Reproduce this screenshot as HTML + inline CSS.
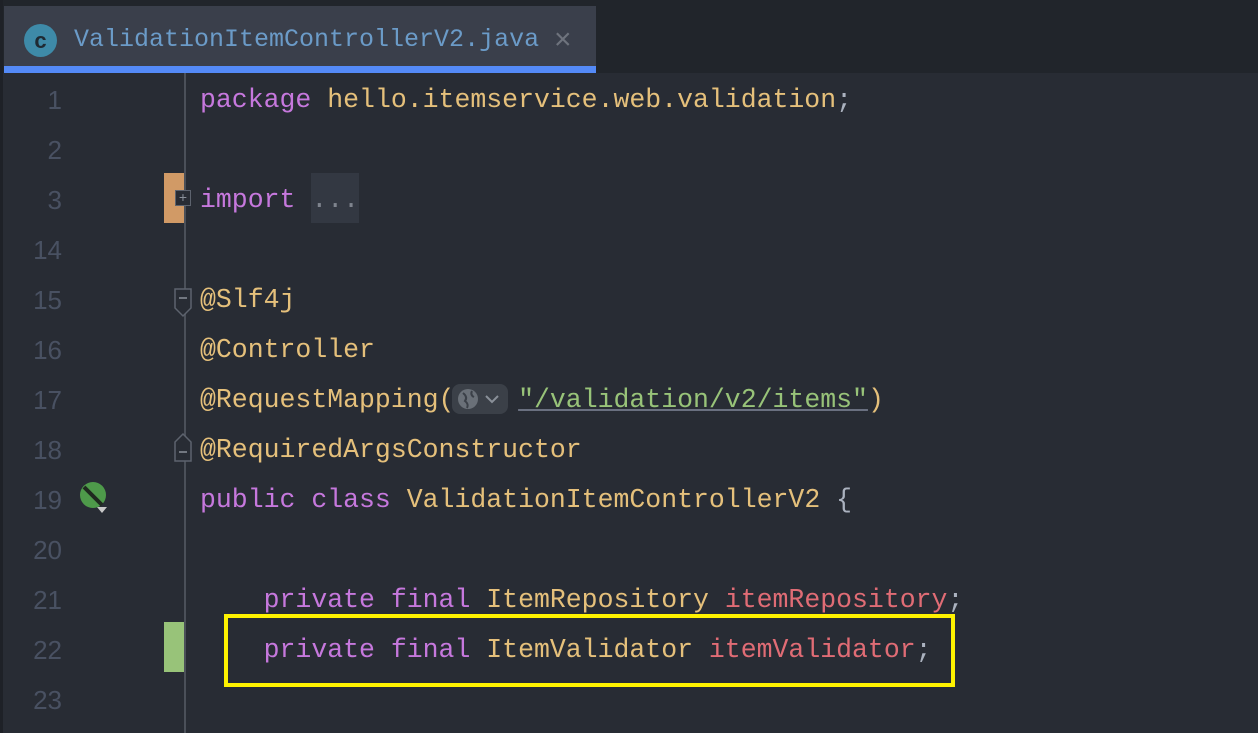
<!DOCTYPE html>
<html><head><meta charset="utf-8"><style>
*{margin:0;padding:0;box-sizing:border-box}
body{width:1258px;height:733px;overflow:hidden;background:#282c34;position:relative;font-family:"Liberation Mono",monospace}
.top{position:absolute;left:0;top:0;width:1258px;height:73px;background:#21252b}
.tab{position:absolute;left:4px;top:6px;width:592px;height:67px;background:#3a3f4b}
.ul{position:absolute;left:4px;top:66px;width:592px;height:7px;background:#548af7}
.lb{position:absolute;left:0;top:0;width:3px;height:733px;background:#1e2127}
.ln{position:absolute;left:0;width:62px;text-align:right;color:#495162;font-size:26px;line-height:50px;font-family:"Liberation Sans",sans-serif}
.code{position:absolute;left:200px;font-size:26.5px;line-height:50px;white-space:pre;color:#abb2bf}
.k{color:#c678dd}.y{color:#e5c07b}.r{color:#e06c75}.g{color:#98c379;text-decoration:underline;text-decoration-color:#6a7080}
.vl{position:absolute;left:184px;top:73px;width:2px;height:660px;background:#4b5059}
</style></head><body>
<div class="top"></div><div class="tab"></div><div class="ul"></div><div class="lb"></div>
<div style="position:absolute;left:24px;top:24px;width:33px;height:33px;border-radius:50%;background:#3e8aa8;color:#1f2a33;font:bold 22px 'Liberation Sans',sans-serif;text-align:center;line-height:33px">c</div>
<div style="position:absolute;left:74px;top:22px;font-size:25px;color:#6b9bc8;line-height:36px">ValidationItemControllerV2.java</div>
<div style="position:absolute;left:554px;top:22px;font:30px 'Liberation Sans',sans-serif;color:#6e737d;line-height:36px">×</div>
<div class="vl"></div>
<div class="ln" style="top:75px">1</div><div class="ln" style="top:125px">2</div><div class="ln" style="top:175px">3</div><div class="ln" style="top:225px">14</div><div class="ln" style="top:275px">15</div><div class="ln" style="top:325px">16</div><div class="ln" style="top:375px">17</div><div class="ln" style="top:425px">18</div><div class="ln" style="top:475px">19</div><div class="ln" style="top:525px">20</div><div class="ln" style="top:575px">21</div><div class="ln" style="top:625px">22</div><div class="ln" style="top:675px">23</div>
<div style="position:absolute;left:164px;top:173px;width:20px;height:50px;background:#d19a66"></div>
<div style="position:absolute;left:175px;top:190px;width:16px;height:16px;border:1.5px solid #5d636e;background:#282c34;color:#8a909a;font:14px/13px 'Liberation Sans';text-align:center">+</div>
<div style="position:absolute;left:311px;top:173px;width:48px;height:50px;background:#333842"></div>
<svg style="position:absolute;left:174px;top:288px" width="20" height="30"><path d="M1 1H17V20L9 28L1 20Z" fill="#282c34" stroke="#5d636e" stroke-width="1.5"/><path d="M5 10H13" stroke="#8a909a" stroke-width="1.5"/></svg>
<svg style="position:absolute;left:174px;top:433px" width="20" height="30"><path d="M1 28H17V9L9 1L1 9Z" fill="#282c34" stroke="#5d636e" stroke-width="1.5"/><path d="M5 19H13" stroke="#8a909a" stroke-width="1.5"/></svg>
<svg style="position:absolute;left:78px;top:480px" width="36" height="34"><circle cx="15" cy="15" r="13" fill="#4e9a4a"/><path d="M6 7L24 25" stroke="#1f2a1f" stroke-width="4"/><path d="M19 27H29L24 33Z" fill="#c8c8c8"/></svg>
<div style="position:absolute;left:164px;top:622px;width:20px;height:50px;background:#98c379"></div>
<div style="position:absolute;left:452px;top:384px;width:56px;height:30px;border-radius:8px;background:#3b4048"></div>
<svg style="position:absolute;left:455px;top:386px" width="52" height="26"><circle cx="13" cy="13" r="10" fill="#6a7078"/><path d="M8 7Q13 11 10 15Q14 18 12 22M17 5Q15 9 19 11" stroke="#3b4048" stroke-width="2" fill="none"/><path d="M31 10L37 16L43 10" stroke="#8a9099" stroke-width="2" fill="none"/></svg>
<div class="code" style="top:75px"><span class="k">package</span> <span class="y">hello.itemservice.web.validation</span>;</div>
<div class="code" style="top:175px"><span class="k">import</span> <span style="color:#7f848e">...</span></div>
<div class="code y" style="top:275px">@Slf4j</div>
<div class="code y" style="top:325px">@Controller</div>
<div class="code" style="top:375px"><span class="y">@RequestMapping(</span>    <span class="g">"/validation/v2/items"</span><span class="y">)</span></div>
<div class="code y" style="top:425px">@RequiredArgsConstructor</div>
<div class="code" style="top:475px"><span class="k">public class</span> <span class="y">ValidationItemControllerV2</span> {</div>
<div class="code" style="top:575px">    <span class="k">private final</span> <span class="y">ItemRepository</span> <span class="r">itemRepository</span>;</div>
<div class="code" style="top:625px">    <span class="k">private final</span> <span class="y">ItemValidator</span> <span class="r">itemValidator</span>;</div>
<div style="position:absolute;left:224px;top:614px;width:731px;height:73px;border:4px solid #fff200"></div>
</body></html>
